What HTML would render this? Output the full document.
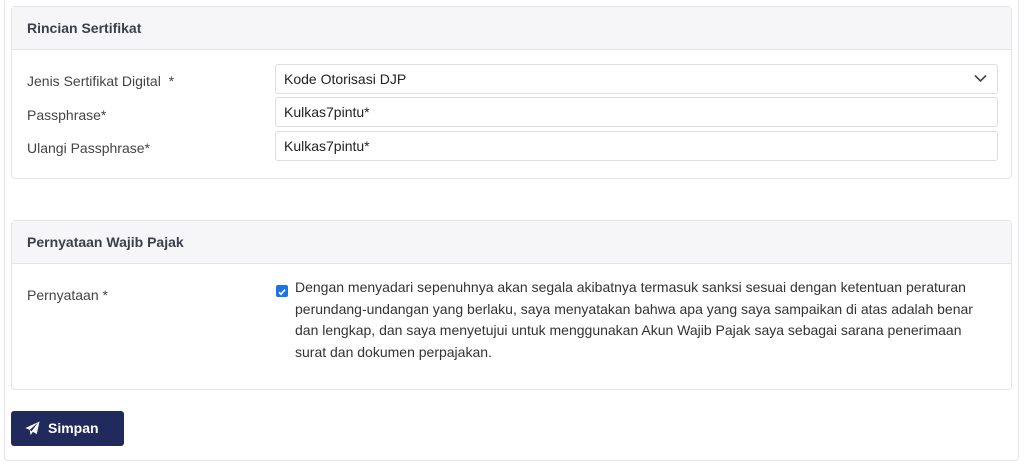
<!DOCTYPE html>
<html><head><style>
*{box-sizing:border-box;margin:0;padding:0}
body{width:1024px;height:465px;background:#fff;font-family:"Liberation Sans",sans-serif;color:#333;position:relative;overflow:hidden}
.outer{position:absolute;left:4px;top:-2px;width:1015px;height:463px;border:1px solid #e6e6ea;border-radius:4px}
.card{position:absolute;left:11px;width:1001px;border:1px solid #e3e3e8;border-radius:4px;background:#fff}
.hd{background:#f6f6f8;border-bottom:1px solid #e3e3e8;height:43px;padding-left:15px;line-height:43px;font-weight:bold;font-size:14px;color:#3a3f4a}
.lbl{position:absolute;left:15px;font-size:14px;color:#444}
.inp{position:absolute;left:263px;width:723px;height:30px;border:1px solid #dcdce2;border-radius:3px;font-size:14px;line-height:28px;padding-left:8px;color:#222}
.txt{position:absolute;left:283px;top:56px;font-size:14px;line-height:21.7px;color:#333}
.cb{position:absolute;left:264px;top:64px;width:12px;height:12px;background:#1a73e8;border-radius:2px}
.btn{position:absolute;left:11px;top:411px;width:113px;height:35px;background:#212a5c;border-radius:3px;color:#fff;font-weight:bold;font-size:14px;line-height:35px;padding-left:37px}
</style></head><body>
<div class="outer"></div>
<div class="card" style="top:6px;height:173px">
 <div class="hd">Rincian Sertifikat</div>
 <div class="lbl" style="top:66px">Jenis Sertifikat Digital &nbsp;*</div>
 <div class="lbl" style="top:100px">Passphrase*</div>
 <div class="lbl" style="top:133px">Ulangi Passphrase*</div>
 <div class="inp" style="top:57px">Kode Otorisasi DJP
  <svg style="position:absolute;right:10px;top:9px" width="13" height="9" viewBox="0 0 13 9"><path d="M1 1.5l5.5 5.5 5.5-5.5" fill="none" stroke="#444" stroke-width="1.6"/></svg></div>
 <div class="inp" style="top:90px">Kulkas7pintu*</div>
 <div class="inp" style="top:124px">Kulkas7pintu*</div>
</div>
<div class="card" style="top:220px;height:170px">
 <div class="hd">Pernyataan Wajib Pajak</div>
 <div class="lbl" style="top:66px">Pernyataan *</div>
 <div class="cb"><svg width="12" height="12" viewBox="0 0 12 12"><path d="M3 6.2l2 2 4-4.5" fill="none" stroke="#fff" stroke-width="1.7"/></svg></div>
 <div class="txt">Dengan menyadari sepenuhnya akan segala akibatnya termasuk sanksi sesuai dengan ketentuan peraturan<br>perundang-undangan yang berlaku, saya menyatakan bahwa apa yang saya sampaikan di atas adalah benar<br>dan lengkap, dan saya menyetujui untuk menggunakan Akun Wajib Pajak saya sebagai sarana penerimaan<br>surat dan dokumen perpajakan.</div>
</div>
<div class="btn"><svg style="position:absolute;left:14px;top:10px" width="15" height="15" viewBox="0 0 16 16"><path d="M15.5 0.5L0.5 7.5l4.5 2 1 5.5 2.5-3.5 4 2.5z M5 9.5l9-8-7 9.5" fill="#fff"/></svg>Simpan</div>
</body></html>
